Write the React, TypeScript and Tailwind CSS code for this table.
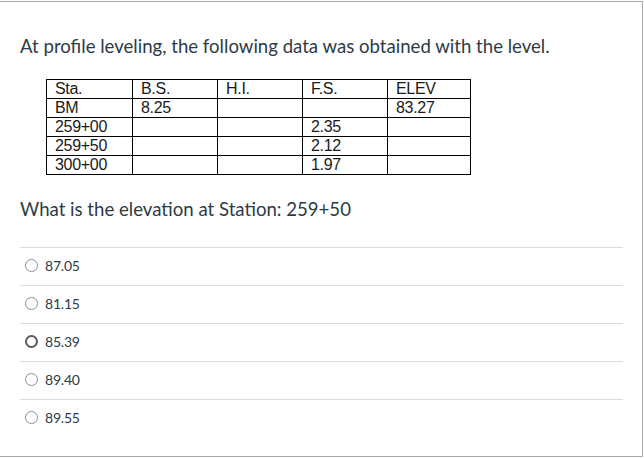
import { useState } from 'react';

const rows = [
  ['Sta.', 'B.S.', 'H.I.', 'F.S.', 'ELEV'],
  ['BM', '8.25', '', '', '83.27'],
  ['259+00', '', '', '2.35', ''],
  ['259+50', '', '', '2.12', ''],
  ['300+00', '', '', '1.97', ''],
];

const answers = ['87.05', '81.15', '85.39', '89.40', '89.55'];

export default function App() {
  const [picked, setPicked] = useState<string | null>(null);

  return (
    <div className="h-[458px] w-[644px] bg-white" style={{ fontFamily: 'Lato, "Open Sans", sans-serif' }}>
      <div className="mt-px h-[456px] w-[643px] border-t border-r border-b border-[#a8a8a8]">
        <div className="pt-[31px] pl-5 pr-5">
          <p className="text-[18.6px] leading-[27px] text-[#2d3b45]">
            At profile leveling, the following data was obtained with the level.
          </p>

          <table
            className="mt-[19px] ml-[26px] border-collapse text-[16px] leading-[18px] text-[#1a1a1a]"
            style={{ fontFamily: '"Liberation Sans", Arial, sans-serif' }}
          >
            <tbody>
              {rows.map((r, i) => (
                <tr key={i}>
                  {r.map((c, j) => (
                    <td
                      key={j}
                      className={
                        'h-[18.8px] border border-black p-0 pl-[8px] tracking-[-0.3px] ' +
                        (j === 0 ? 'w-[86px]' : j === 4 ? 'w-[83px]' : 'w-[85px]')
                      }
                    >
                      {c}
                    </td>
                  ))}
                </tr>
              ))}
            </tbody>
          </table>

          <p className="mt-[21px] text-[18.6px] leading-[27px] text-[#2d3b45]">
            What is the elevation at Station: 259+50
          </p>

          <div className="mt-[24px] w-[603px]">
            {answers.map((a, i) => (
              <label
                key={a}
                className="flex h-[38px] cursor-pointer items-center border-t border-[#dcdcdc] pb-[2px] pl-[5px] text-[14px] text-[#2d3b45]"
              >
                <input
                  type="radio"
                  name="ans"
                  checked={picked === a}
                  onChange={() => setPicked(a)}
                  className="sr-only"
                />
                <span
                  className={
                    'mr-[7px] inline-block h-[13px] w-[13px] rounded-full bg-white ' +
                    (i === 2 ? 'border-[2px] border-[#5a5a62]' : 'border-[1.5px] border-[#8d8d96]')
                  }
                />
                <span className="tracking-[-0.2px]">{a}</span>
              </label>
            ))}
          </div>
        </div>
      </div>
    </div>
  );
}
